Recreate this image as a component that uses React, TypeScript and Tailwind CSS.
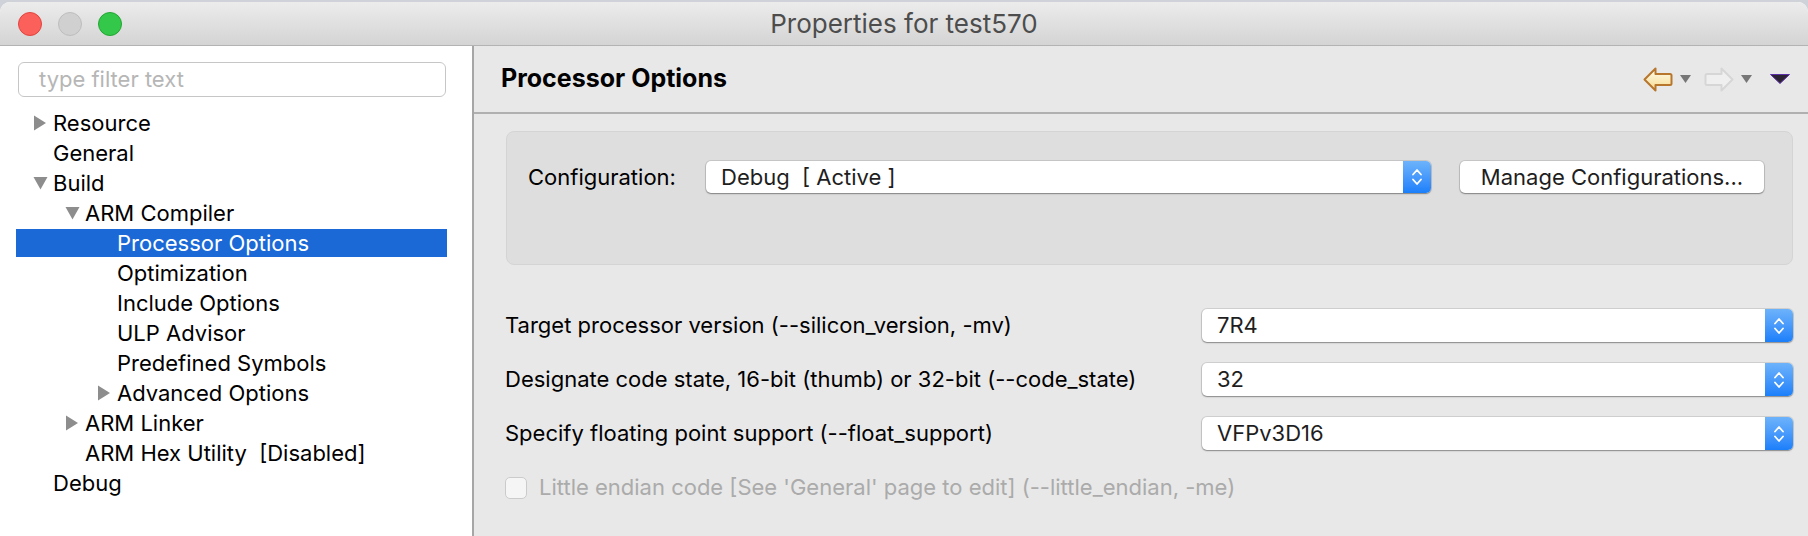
import clsx from 'clsx';

type TreeNode = { label: string; depth: number; arrow?: 'right' | 'down'; selected?: boolean };

const tree: TreeNode[] = [
  { label: 'Resource', depth: 0, arrow: 'right' },
  { label: 'General', depth: 0 },
  { label: 'Build', depth: 0, arrow: 'down' },
  { label: 'ARM Compiler', depth: 1, arrow: 'down' },
  { label: 'Processor Options', depth: 2, selected: true },
  { label: 'Optimization', depth: 2 },
  { label: 'Include Options', depth: 2 },
  { label: 'ULP Advisor', depth: 2 },
  { label: 'Predefined Symbols', depth: 2 },
  { label: 'Advanced Options', depth: 2, arrow: 'right' },
  { label: 'ARM Linker', depth: 1, arrow: 'right' },
  { label: 'ARM Hex Utility  [Disabled]', depth: 1 },
  { label: 'Debug', depth: 0 },
];

const indent = ['pl-[17px]', 'pl-[49px]', 'pl-[81px]'];

const options = [
  { label: 'Target processor version (--silicon_version, -mv)', value: '7R4' },
  { label: 'Designate code state, 16-bit (thumb) or 32-bit (--code_state)', value: '32' },
  { label: 'Specify floating point support (--float_support)', value: 'VFPv3D16' },
];

function Twisty({ dir }: { dir?: 'right' | 'down' }) {
  return (
    <span className="flex w-[20px] items-center">
      {dir === 'right' && (
        <svg width="14" height="16" viewBox="0 0 14 16">
          <path d="M1 0.5 L13 8 L1 15.5 Z" fill="#8d8d8d" />
        </svg>
      )}
      {dir === 'down' && (
        <svg width="15" height="14" viewBox="0 0 15 14">
          <path d="M0.5 1 L14.5 1 L7.5 13.5 Z" fill="#8d8d8d" />
        </svg>
      )}
    </span>
  );
}

function Stepper() {
  return (
    <div className="flex w-[28px] items-center justify-center self-stretch rounded-r-[5px] bg-linear-to-b from-[#6db3fb] to-[#1a7ffa]">
      <svg width="12" height="20" viewBox="0 0 12 20" fill="none" stroke="white" strokeWidth="1.8" strokeLinecap="round" strokeLinejoin="round">
        <path d="M2 7.5 L6 3 L10 7.5" />
        <path d="M2 12.5 L6 17 L10 12.5" />
      </svg>
    </div>
  );
}

function Combo({ value, className }: { value: string; className?: string }) {
  return (
    <div className={clsx('flex h-[33px] items-stretch rounded-[5px] bg-white shadow-[0_0_0_1px_rgba(0,0,0,0.1),0_1px_1.5px_rgba(0,0,0,0.35)]', className)}>
      <div className="flex flex-1 items-center whitespace-pre pl-[15px] text-[22px] text-[#1e1e1e]">{value}</div>
      <Stepper />
    </div>
  );
}

export default function App() {
  return (
    <div className="flex h-[536px] w-[1808px] flex-col overflow-hidden bg-[#cfd3d9] font-['Inter',sans-serif] text-black">
      <div className="mt-[2px] flex flex-1 flex-col overflow-hidden rounded-t-[10px] bg-white">
        {/* title bar */}
        <div className="relative flex h-[44px] items-center justify-center border-b border-[#b3b3b3] bg-linear-to-b from-[#ececec] to-[#d4d4d4]">
          <div className="absolute left-[18px] top-[10px] flex gap-[16px]">
            <span className="h-[24px] w-[24px] rounded-full border border-[#e0443e] bg-[#fc605b]" />
            <span className="h-[24px] w-[24px] rounded-full border border-[#bdbdbd] bg-[#d0d0d0]" />
            <span className="h-[24px] w-[24px] rounded-full border border-[#23a534] bg-[#34c84a]" />
          </div>
          <span className="text-[26px] text-[#4d4d4d]">Properties for test570</span>
        </div>

        <div className="flex flex-1">
          {/* left tree */}
          <div className="flex w-[472px] flex-col bg-white pt-[16px]">
            <div className="ml-[18px] flex h-[35px] w-[428px] items-center rounded-[6px] border border-[#c6c6c6] pl-[20px] text-[22px] text-[#b6b6b6]">
              type filter text
            </div>
            <div className="ml-[16px] mt-[11px] w-[431px]">
              {tree.map((n) => (
                <div key={n.label} className="flex h-[30px] py-[1px]">
                  <div className={clsx('flex flex-1 items-center whitespace-pre text-[22px]', indent[n.depth], n.selected && 'bg-[#1b69d7] text-white')}>
                    <Twisty dir={n.arrow} />
                    {n.label}
                  </div>
                </div>
              ))}
            </div>
          </div>

          <div className="w-[2px] bg-[#a6a6a6]" />

          {/* right page */}
          <div className="flex flex-1 flex-col bg-[#e8e8e8]">
            <div className="flex h-[68px] items-center border-b-2 border-[#b0b0b0] pl-[27px] pr-[18px]">
              <span className="flex-1 text-[25px] font-bold">Processor Options</span>
              <div className="flex items-center">
                <svg width="30" height="25" viewBox="0 0 30 25">
                  <defs>
                    <linearGradient id="bk" x1="0" y1="0" x2="0" y2="1">
                      <stop offset="0" stopColor="#fffdf0" />
                      <stop offset="1" stopColor="#f6d98c" />
                    </linearGradient>
                  </defs>
                  <path d="M1.5 12.5 L12.5 1.5 L12.5 7 L27 7 Q28.5 7 28.5 8.5 L28.5 16.5 Q28.5 18 27 18 L12.5 18 L12.5 23.5 Z" fill="url(#bk)" stroke="#b7762c" strokeWidth="2" strokeLinejoin="round" />
                </svg>
                <svg className="ml-[7px]" width="11" height="8" viewBox="0 0 11 8">
                  <path d="M0 0 L11 0 L5.5 8 Z" fill="#777" />
                </svg>
                <svg className="ml-[13px]" width="30" height="25" viewBox="0 0 30 25">
                  <path d="M28.5 12.5 L17.5 1.5 L17.5 7 L3 7 Q1.5 7 1.5 8.5 L1.5 16.5 Q1.5 18 3 18 L17.5 18 L17.5 23.5 Z" fill="#efefef" stroke="#d6d6d6" strokeWidth="2" strokeLinejoin="round" />
                </svg>
                <svg className="ml-[7px]" width="11" height="8" viewBox="0 0 11 8">
                  <path d="M0 0 L11 0 L5.5 8 Z" fill="#777" />
                </svg>
                <svg className="ml-[18px]" width="20" height="10" viewBox="0 0 20 10">
                  <path d="M0.5 0.5 L19.5 0.5 L10 9.5 Z" fill="#2b2233" stroke="#5b2fa5" strokeWidth="1" strokeLinejoin="round" />
                </svg>
              </div>
            </div>

            <div className="ml-[32px] mr-[15px] mt-[17px] flex h-[134px] items-start rounded-[8px] border border-[#d4d4d4] bg-[#dedede] pl-[21px] pr-[28px] pt-[29px]">
              <div className="flex h-[32px] w-[178px] items-center text-[22px]">Configuration:</div>
              <Combo value="Debug  [ Active ]" className="!h-[32px] w-[725px]" />
              <div className="ml-[29px] flex h-[32px] flex-1 items-center justify-center rounded-[5px] bg-white text-[22px] text-[#1e1e1e] shadow-[0_0_0_1px_rgba(0,0,0,0.1),0_1px_1.5px_rgba(0,0,0,0.35)]">
                Manage Configurations...
              </div>
            </div>

            <div className="mr-[15px] mt-[44px] flex flex-col gap-[21px] pl-[31px]">
              {options.map((o) => (
                <div key={o.label} className="flex items-center">
                  <div className="w-[697px] text-[22px]">{o.label}</div>
                  <Combo value={o.value} className="flex-1" />
                </div>
              ))}
              <div className="flex items-center">
                <span className="h-[22px] w-[22px] rounded-[5px] border border-[#cbcbcb] bg-[#f5f5f5]" />
                <span className="ml-[12px] text-[22px] text-[#ababab]">
                  Little endian code [See 'General' page to edit] (--little_endian, -me)
                </span>
              </div>
            </div>
          </div>
        </div>
      </div>
    </div>
  );
}
